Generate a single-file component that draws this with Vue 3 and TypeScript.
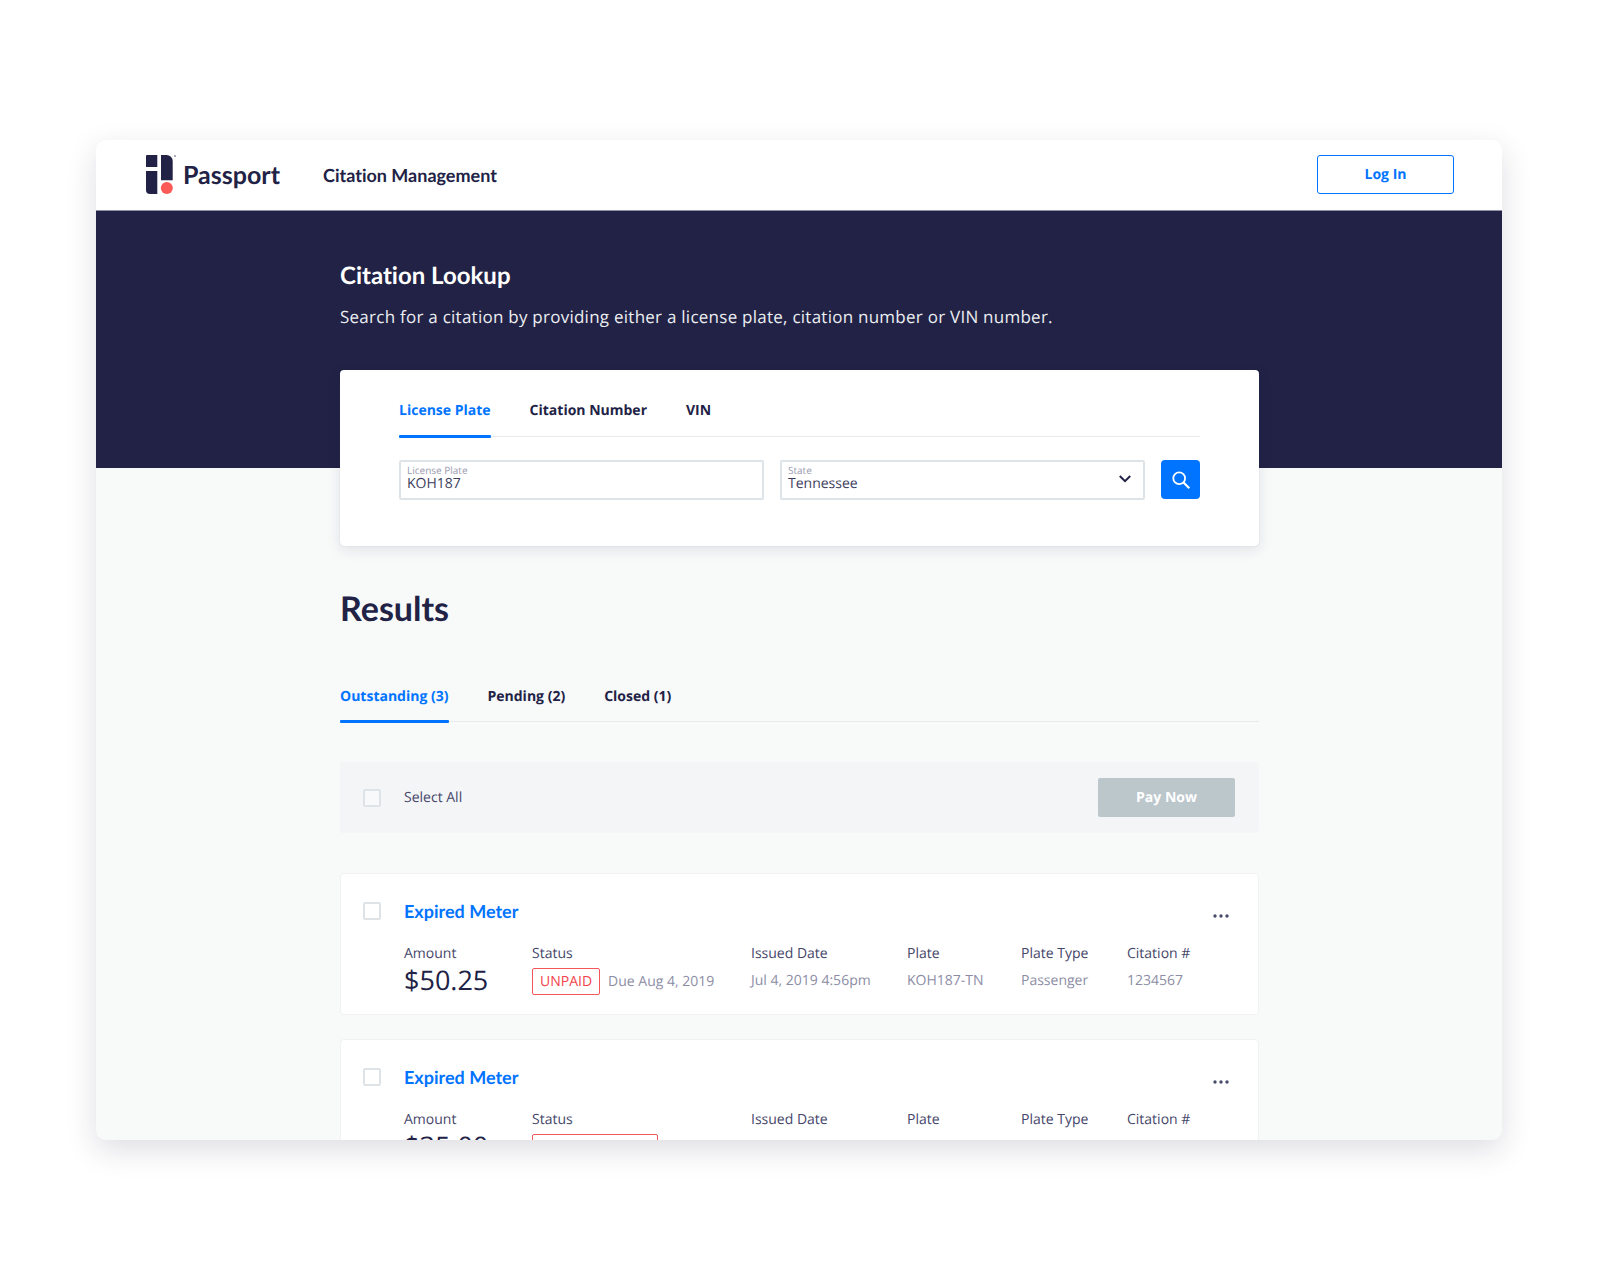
<script setup lang="ts">
interface Citation {
  title: string
  amount: string
  badge: string
  due: string
  issued: string
  plate: string
  type: string
  number: string
}
const citations: Citation[] = [
  { title: 'Expired Meter', amount: '$50.25', badge: 'UNPAID', due: 'Due Aug 4, 2019', issued: 'Jul 4, 2019 4:56pm', plate: 'KOH187-TN', type: 'Passenger', number: '1234567' },
  { title: 'Expired Meter', amount: '$35.00', badge: 'IN COLLECTIONS', due: '', issued: 'Jul 4, 2019 4:56pm', plate: 'KOH187-TN', type: 'Passenger', number: '1234567' }
]
</script>

<template>
  <div class="page">
    <div class="window">
      <header class="top">
        <svg class="logo" width="32" height="42" viewBox="0 0 32 42" aria-hidden="true">
          <path d="M1 2a1 1 0 0 1 1-1h10.300v12H1z" fill="#212245" />
          <path d="M1 17h11.300v23H5a4 4 0 0 1-4-4z" fill="#212245" />
          <path d="M16 1h5.500a6.200 6.200 0 0 1 6.200 6.200v19H16z" fill="#212245" />
          <circle cx="21.800" cy="34" r="6" fill="#fb5a57" />
          <circle cx="30" cy="2" r="1" fill="#8f90a6" />
        </svg>
        <span class="brand">Passport</span>
        <span class="app">Citation Management</span>
        <button class="login">Log In</button>
      </header>

      <section class="hero">
        <h1>Citation Lookup</h1>
        <p>Search for a citation by providing either a license plate, citation number or VIN number.</p>
      </section>

      <main class="content">
        <div class="search-card">
          <nav class="tabs small">
            <span class="tab active">License Plate</span>
            <span class="tab">Citation Number</span>
            <span class="tab">VIN</span>
          </nav>
          <div class="fields">
            <div class="field">
              <span class="flabel">License Plate</span>
              <span class="fvalue">KOH187</span>
            </div>
            <div class="field">
              <span class="flabel">State</span>
              <span class="fvalue">Tennessee</span>
              <svg class="chev" width="14" height="10" viewBox="0 0 14 10" aria-hidden="true">
                <path d="M1.800 2l5.200 5.200L12.200 2" fill="none" stroke="#212245" stroke-width="2" />
              </svg>
            </div>
            <button class="go" aria-label="Search">
              <svg width="20" height="20" viewBox="0 0 20 20" aria-hidden="true">
                <circle cx="8.200" cy="8.200" r="5.900" fill="none" stroke="#fff" stroke-width="1.800" />
                <path d="M12.500 12.500l5.800 5.800" fill="none" stroke="#fff" stroke-width="2.200" />
              </svg>
            </button>
          </div>
        </div>

        <h2>Results</h2>

        <nav class="tabs results">
          <span class="tab active">Outstanding (3)</span>
          <span class="tab">Pending (2)</span>
          <span class="tab">Closed (1)</span>
        </nav>

        <div class="select-bar">
          <span class="check"></span>
          <span class="select-label">Select All</span>
          <button class="pay">Pay Now</button>
        </div>

        <article v-for="(c, i) in citations" :key="i" class="citation">
          <span class="check"></span>
          <div class="body">
            <div class="title">{{ c.title }}</div>
            <div class="cols">
              <div class="col c-amount">
                <div class="lbl">Amount</div>
                <div class="amount">{{ c.amount }}</div>
              </div>
              <div class="col c-status">
                <div class="lbl">Status</div>
                <div class="status-row">
                  <span class="badge">{{ c.badge }}</span>
                  <span v-if="c.due" class="val">{{ c.due }}</span>
                </div>
              </div>
              <div class="col c-issued">
                <div class="lbl">Issued Date</div>
                <div class="val row-val">{{ c.issued }}</div>
              </div>
              <div class="col c-plate">
                <div class="lbl">Plate</div>
                <div class="val row-val">{{ c.plate }}</div>
              </div>
              <div class="col c-type">
                <div class="lbl">Plate Type</div>
                <div class="val row-val">{{ c.type }}</div>
              </div>
              <div class="col">
                <div class="lbl">Citation #</div>
                <div class="val row-val">{{ c.number }}</div>
              </div>
            </div>
          </div>
          <svg class="more" width="16" height="4" viewBox="0 0 16 4" aria-hidden="true">
            <circle cx="2" cy="2" r="1.700" fill="#4a4b6a" />
            <circle cx="8" cy="2" r="1.700" fill="#4a4b6a" />
            <circle cx="14" cy="2" r="1.700" fill="#4a4b6a" />
          </svg>
        </article>
      </main>
    </div>
  </div>
</template>

<style>
html, body { margin: 0; background: #fff; }
</style>

<style scoped>
.page {
  width: 1600px;
  height: 1280px;
  padding: 140px 98px 140px 96px;
  box-sizing: border-box;
  background: #fff;
  font-family: "Open Sans", sans-serif;
  color: #212245;
  overflow: hidden;
  text-rendering: geometricPrecision;
  font-variant-ligatures: none;
}
.window {
  height: 1000px;
  border-radius: 10px;
  overflow: hidden;
  background: #f8f9f9;
  box-shadow: 0 10px 30px rgba(33, 34, 69, 0.15);
}
.top {
  background: #fff;
  border-bottom: 1px solid #8f90a6;
  box-sizing: border-box;
  height: 71px;
  display: flex;
  align-items: center;
  padding: 0 48px 0 49px;
}
.logo { flex: none; }
.brand {
  font-family: Lato, sans-serif;
  font-weight: 700;
  font-size: 25px;
  margin-left: 6px;
  color: #212245;
  width: 140px;
}
.app {
  font-family: Lato, sans-serif;
  font-weight: 700;
  font-size: 18px;
  color: #212245;
}
.login {
  margin-left: auto;
  width: 137px;
  height: 39px;
  margin-top: -1px;
  background: #fff;
  border: 1.500px solid #0074ff;
  border-radius: 3px;
  color: #0074ff;
  font-family: "Open Sans", sans-serif;
  font-weight: 700;
  font-size: 14px;
  text-rendering: geometricPrecision;
}
.hero {
  height: 257px;
  background: #212245;
  padding: 50px 0 0 244px;
  box-sizing: border-box;
  color: #fff;
}
.hero h1 {
  margin: 0;
  font-family: Lato, sans-serif;
  font-weight: 700;
  font-size: 24px;
  line-height: 30px;
}
.hero p {
  margin: 12px 0 0;
  font-size: 17px;
  letter-spacing: 0.25px;
  line-height: 28px;
  color: #eceef2;
}
.content {
  width: 919px;
  margin: -98px 0 0 244px;
  position: relative;
}
.search-card {
  height: 176px;
  background: #fff;
  border-radius: 4px;
  box-shadow: 0 4px 14px rgba(33, 34, 69, 0.1), 0 0 1px rgba(33, 34, 69, 0.3);
  padding: 23px 59px 0;
  box-sizing: border-box;
}
.tabs {
  display: flex;
  gap: 39px;
  border-bottom: 1px solid #e8ebed;
  font-weight: 700;
  font-size: 14px;
}
.tabs.small { height: 43px; }
.tabs.results { height: 41px; margin-top: 46px; }
.tab {
  position: relative;
  color: #212245;
}
.tab.active { color: #0074ff; }
.tab.active::after {
  content: "";
  position: absolute;
  left: 0;
  right: 0;
  bottom: -2px;
  height: 3px;
  border-radius: 1px;
  background: #0074ff;
}
.tabs.small .tab { height: 43px; line-height: 36px; }
.tabs.results .tab { height: 41px; line-height: 33px; }
.fields {
  display: flex;
  gap: 16px;
  margin-top: 23px;
}
.field {
  position: relative;
  flex: 1;
  height: 40px;
  border: 2px solid #dde3e7;
  border-radius: 2px;
  padding: 3px 6px 0;
  box-sizing: border-box;
  display: flex;
  flex-direction: column;
}
.flabel {
  font-size: 10px;
  line-height: 10px;
  color: #9a9bb0;
}
.fvalue {
  font-size: 14px;
  line-height: 16px;
  color: #3d3e5c;
  margin-top: 1px;
}
.chev {
  position: absolute;
  right: 11px;
  top: 12px;
}
.go {
  flex: none;
  width: 39px;
  height: 39px;
  padding: 0;
  border: 0;
  border-radius: 4px;
  background: #0074ff;
  display: flex;
  align-items: center;
  justify-content: center;
}
h2 {
  margin: 38px 0 0;
  font-family: Lato, sans-serif;
  font-weight: 700;
  font-size: 34px;
  line-height: 50px;
  color: #212245;
}
.select-bar {
  height: 71px;
  margin-top: 40px;
  background: #f4f5f7;
  border-radius: 3px;
  display: flex;
  align-items: center;
  padding: 0 24px 0 23px;
}
.check {
  flex: none;
  width: 18px;
  height: 18px;
  box-sizing: border-box;
  border: 2px solid #dde3e7;
  border-radius: 2px;
  background: #fff;
}
.select-bar .check { background: #f8f9fa; }
.select-label {
  margin-left: 23px;
  font-size: 14px;
  color: #45466a;
}
.pay {
  margin-left: auto;
  width: 137px;
  height: 39px;
  border: 0;
  border-radius: 2px;
  background: #bcc7cc;
  color: #fff;
  font-family: "Open Sans", sans-serif;
  font-weight: 700;
  font-size: 14px;
  text-rendering: geometricPrecision;
}
.citation {
  position: relative;
  height: 142px;
  margin-top: 40px;
  background: #fff;
  border: 1px solid #eff1f3;
  border-radius: 4px;
  padding: 28px 0 0 22px;
  box-sizing: border-box;
  display: flex;
  align-items: flex-start;
}
.citation + .citation { margin-top: 24px; }
.body { margin-left: 23px; flex: 1; margin-top: -3px; }
.title {
  font-family: Lato, sans-serif;
  font-weight: 700;
  font-size: 18px;
  line-height: 24px;
  color: #0074ff;
}
.cols {
  display: flex;
  margin-top: 21px;
}
.c-amount { width: 128px; }
.c-status { width: 219px; }
.c-issued { width: 156px; }
.c-plate { width: 114px; }
.c-type { width: 106px; }
.lbl {
  font-size: 14px;
  line-height: 20px;
  color: #45466a;
}
.amount {
  font-size: 27px;
  line-height: 32px;
  color: #212245;
}
.status-row {
  display: flex;
  align-items: center;
  gap: 8px;
  margin-top: 4px;
}
.badge {
  height: 27px;
  box-sizing: border-box;
  padding: 0 7px;
  border: 1px solid #f3575a;
  border-radius: 2px;
  color: #f3434a;
  font-size: 14px;
  line-height: 25px;
}
.val {
  font-size: 14px;
  line-height: 20px;
  color: #8c8da5;
}
.row-val { margin-top: 7px; }
.more {
  position: absolute;
  right: 29px;
  top: 40px;
}
</style>
